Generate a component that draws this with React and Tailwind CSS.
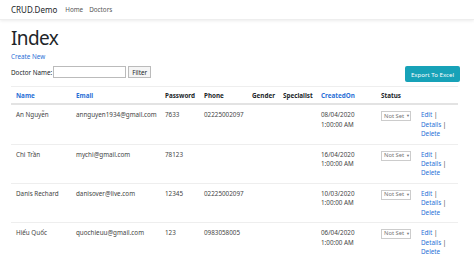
import React from "react";

const rows = [
  { name: "An Nguyễn", email: "annguyen1934@gmail.com", pw: "7633", phone: "02225002097", date: "08/04/2020" },
  { name: "Chi Trần", email: "mychi@gmail.com", pw: "78123", phone: "", date: "16/04/2020" },
  { name: "Danis Rechard", email: "danisover@live.com", pw: "12345", phone: "02225002097", date: "10/03/2020" },
  { name: "Hiếu Quốc", email: "quochieuu@gmail.com", pw: "123", phone: "0983058005", date: "06/04/2020" },
];

const cols = "grid-cols-[60px_89px_39px_48px_31px_38px_60px_40px_42px]";

export default function App() {
  return (
    <div className="w-[474px] h-[261px] overflow-hidden bg-white text-[#212529]" style={{ fontFamily: '"Noto Sans", "Open Sans", sans-serif' }}>
      <nav className="h-[20px] flex items-center px-[11px] shadow-[0_1px_3px_rgba(0,0,0,0.08)] border-b border-[#eeeeee]">
        <span className="text-[8px] leading-none mr-[8px]">CRUD.Demo</span>
        <span className="text-[6.3px] text-[#555] mr-[6px]">Home</span>
        <span className="text-[6.3px] text-[#555]">Doctors</span>
      </nav>
      <div className="px-[11px]">
        <h1 className="text-[19px] leading-none font-normal tracking-[-0.6px] mt-[9px]">Index</h1>
        <div className="text-[6.3px] text-[#2a6fd6] mt-[4px]">Create New</div>
        <div className="flex items-end justify-between mt-[5px]">
          <div className="flex items-center text-[6.3px] mb-[4px]">
            <span>Doctor Name:</span>
            <div className="w-[73px] h-[12px] border border-[#bbb] ml-[1px]" />
            <div className="h-[12px] px-[3px] border border-[#bbb] bg-[#f5f5f5] ml-[2px] flex items-center">Filter</div>
          </div>
          <div className="h-[16px] px-[6px] mr-[3px] bg-[#17a2b8] text-white text-[6.1px] rounded-[2px] flex items-center">Export To Excel</div>
        </div>
        <div className="mt-[4px] w-[447px] text-[6.3px]">
          <div className={`grid ${cols} border-t border-[#eee] border-b-2 border-b-[#e3e3e3] h-[19px] items-center font-bold`}>
            <span className="pl-[5px] text-[#2a6fd6]">Name</span>
            <span className="pl-[5px] text-[#2a6fd6]">Email</span>
            <span className="pl-[5px]">Password</span>
            <span className="pl-[5px]">Phone</span>
            <span className="pl-[5px]">Gender</span>
            <span className="pl-[5px]">Specialist</span>
            <span className="pl-[5px] text-[#2a6fd6]">CreatedOn</span>
            <span className="pl-[5px]">Status</span>
            <span />
          </div>
          {rows.map((r, i) => (
            <div key={i} className={`grid ${cols} border-b border-[#eee] py-[5px] leading-[9.4px] text-[#444]`}>
              <span className="pl-[5px] whitespace-nowrap">{r.name}</span>
              <span className="pl-[5px] whitespace-nowrap">{r.email}</span>
              <span className="pl-[5px]">{r.pw}</span>
              <span className="pl-[5px] whitespace-nowrap">{r.phone}</span>
              <span />
              <span />
              <span className="pl-[5px] whitespace-nowrap">{r.date}<br />1:00:00 AM</span>
              <span className="pl-[5px]">
                <span className="inline-flex items-center whitespace-nowrap h-[10px] w-[30px] border border-[#ccc] text-[#777] text-[5.8px] leading-none pl-[2px] mt-[1px]">Not Set<span className="text-[4px] ml-[2px]">▼</span></span>
              </span>
              <span className="pl-[5px] text-[#2a6fd6] whitespace-nowrap">
                Edit <span className="text-[#444]">|</span><br />Details <span className="text-[#444]">|</span><br />Delete
              </span>
            </div>
          ))}
        </div>
      </div>
    </div>
  );
}
